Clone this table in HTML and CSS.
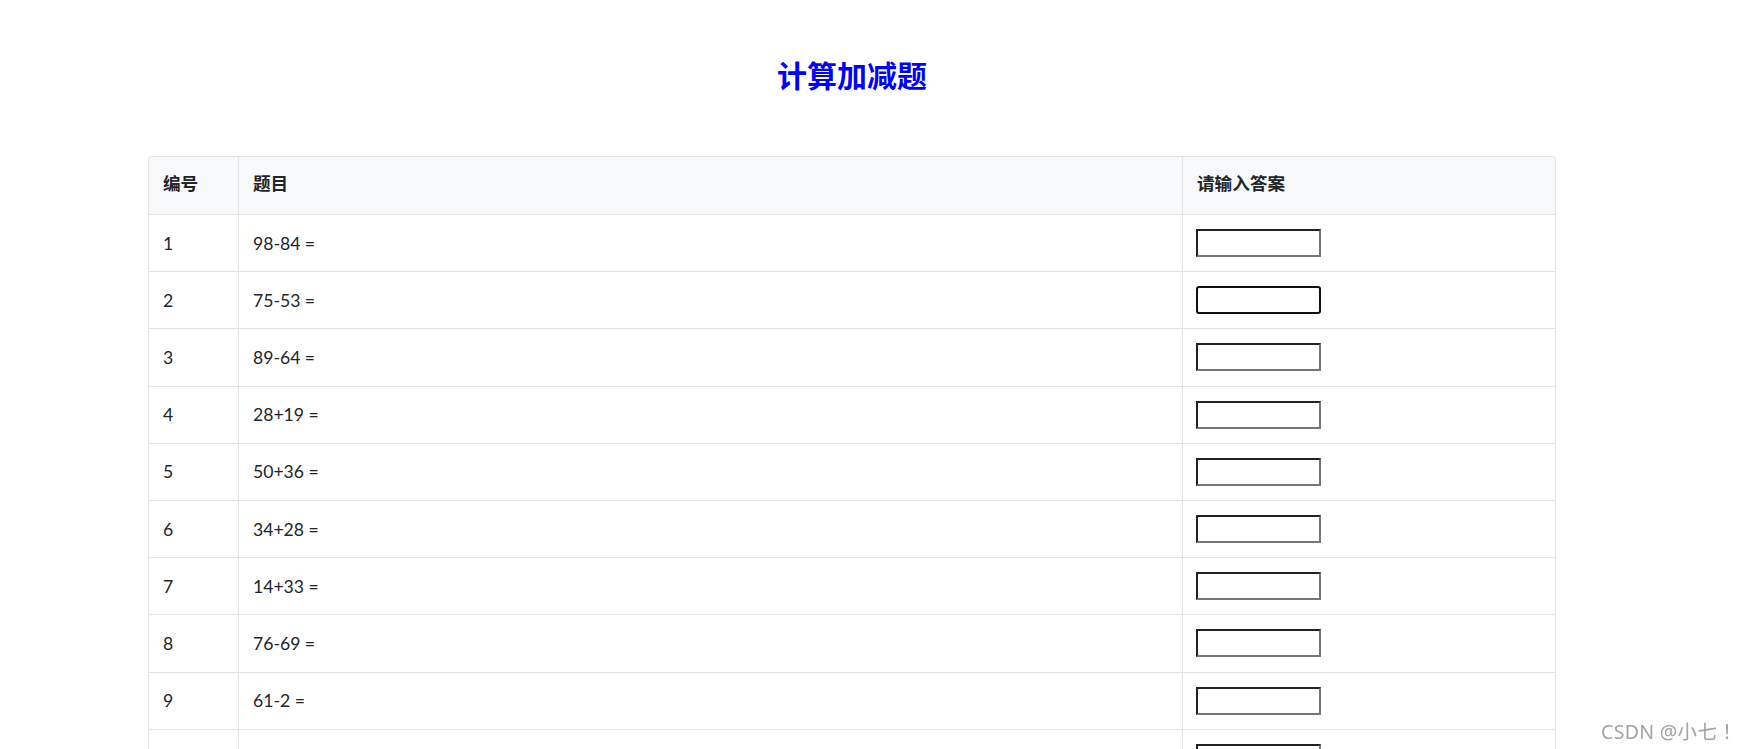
FILE: index.html
```html
<!DOCTYPE html>
<html lang="zh-CN">
<head>
<meta charset="utf-8">
<title>计算加减题</title>
<link rel="stylesheet" href="styles.css">
</head>
<body>
<div class="page">
  <h1 class="title">计算加减题</h1>
  <table class="quiz">
    <thead>
      <tr>
        <th class="c-no">编号</th>
        <th class="c-q">题目</th>
        <th class="c-a">请输入答案</th>
      </tr>
    </thead>
    <tbody>
      <tr><td>1</td><td>98-84 =</td><td class="cell-input"><input class="answer" type="text"></td></tr>
      <tr><td>2</td><td>75-53 =</td><td class="cell-input"><input class="answer focused" type="text"></td></tr>
      <tr><td>3</td><td>89-64 =</td><td class="cell-input"><input class="answer" type="text"></td></tr>
      <tr><td>4</td><td>28+19 =</td><td class="cell-input"><input class="answer" type="text"></td></tr>
      <tr><td>5</td><td>50+36 =</td><td class="cell-input"><input class="answer" type="text"></td></tr>
      <tr><td>6</td><td>34+28 =</td><td class="cell-input"><input class="answer" type="text"></td></tr>
      <tr><td>7</td><td>14+33 =</td><td class="cell-input"><input class="answer" type="text"></td></tr>
      <tr><td>8</td><td>76-69 =</td><td class="cell-input"><input class="answer" type="text"></td></tr>
      <tr><td>9</td><td>61-2 =</td><td class="cell-input"><input class="answer" type="text"></td></tr>
      <tr><td>10</td><td>47+25 =</td><td class="cell-input"><input class="answer" type="text"></td></tr>
    </tbody>
  </table>
</div>
<div class="watermark" lang="ja">CSDN @小七！</div>
</body>
</html>
```

FILE: styles.css
```css
html, body {
  margin: 0;
  padding: 0;
  background: #ffffff;
}

body {
  font-family: Lato, "Noto Sans CJK SC", sans-serif;
  color: #212529;
  overflow: hidden;
}

.page {
  width: 1408px;
  margin-left: 148px;
  padding-top: 54px;
}

.title {
  margin: 0 0 62px 0;
  height: 40px;
  line-height: 40px;
  text-align: center;
  font-family: "Noto Sans CJK SC", sans-serif;
  font-size: 30px;
  font-weight: 700;
  color: #0000ff;
}

.quiz {
  width: 1408px;
  table-layout: fixed;
  border-collapse: separate;
  border-spacing: 0;
  border: 1px solid #e2e2e2;
  border-radius: 4px;
  font-size: 17.6px;
}

.quiz th,
.quiz td {
  box-sizing: border-box;
  padding: 0 14px;
  text-align: left;
  vertical-align: middle;
  border-bottom: 1px solid #e2e2e2;
}

.quiz th + th,
.quiz td + td {
  border-left: 1px solid #e2e2e2;
}

.quiz th {
  height: 58px;
  padding-bottom: 6px;
  background: #f8f9fa;
  font-family: Lato, "Noto Sans CJK SC", sans-serif;
  font-weight: 700;
  font-size: 17.6px;
}

.quiz thead tr:first-child th:first-child {
  border-top-left-radius: 3px;
}

.quiz thead tr:first-child th:last-child {
  border-top-right-radius: 3px;
}

.quiz td {
  height: 57.2px;
}

.quiz td.cell-input {
  padding-left: 13px;
}

.c-no {
  width: 89px;
}

.c-q {
  width: 944px;
}

.c-a {
  width: 373px;
}

.answer {
  display: block;
  box-sizing: border-box;
  width: 125px;
  height: 28px;
  margin: 0;
  padding: 0 4px;
  background: #ffffff;
  border-width: 2px;
  border-style: solid;
  border-color: #222222 #767676 #767676 #222222;
  border-radius: 0;
  outline: none;
  font: inherit;
}

.answer.focused {
  border: 2px solid #101010;
  border-radius: 3px;
}

.watermark {
  position: fixed;
  right: 4px;
  bottom: 5px;
  font-family: "Noto Sans", "Noto Sans CJK JP", sans-serif;
  font-size: 19.5px;
  line-height: 24px;
  letter-spacing: 0.3px;
  color: #a3a3a3;
}
```
